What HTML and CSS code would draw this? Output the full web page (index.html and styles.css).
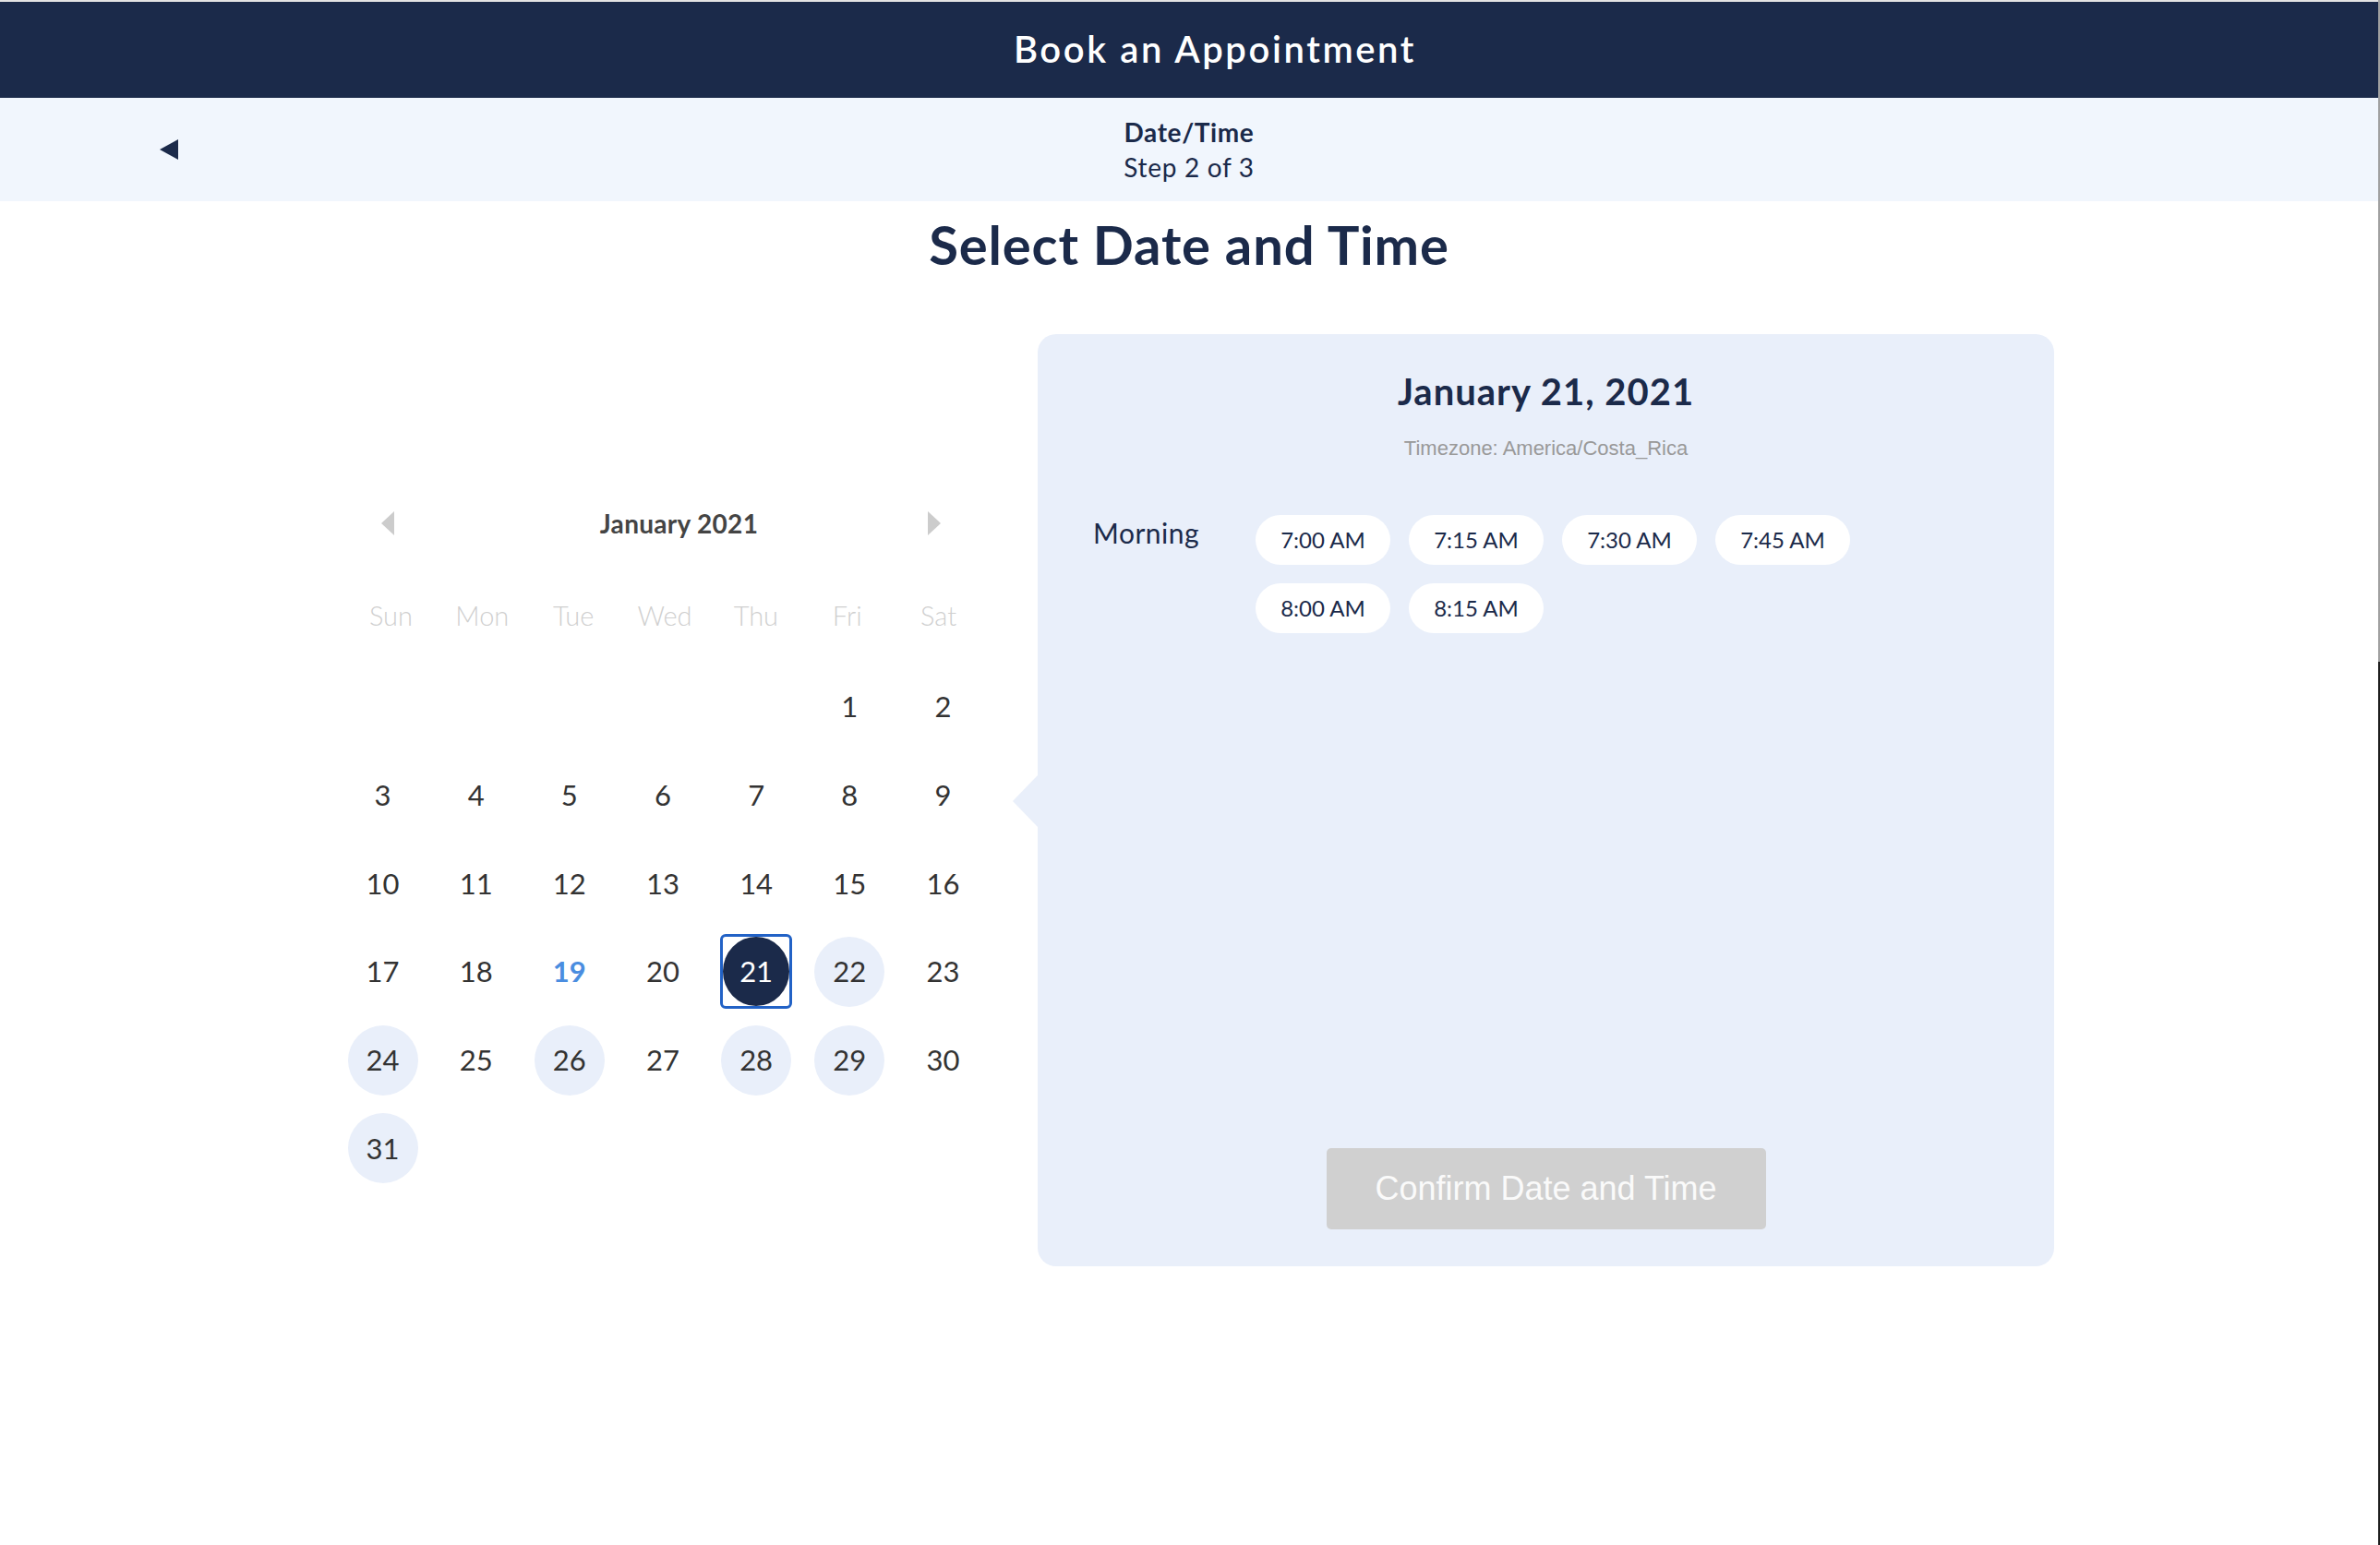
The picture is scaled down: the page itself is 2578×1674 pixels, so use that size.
FILE: index.html
```html
<!DOCTYPE html>
<html lang="en">
<head>
<meta charset="utf-8">
<title>Book an Appointment</title>
<link rel="stylesheet" href="styles.css">
</head>
<body>
<header class="topbar">
  <h1 class="topbar-title">Book an Appointment</h1>
</header>
<nav class="stepbar">
  <div class="stepbar-back">
    <button class="back-btn" aria-label="Back">
      <svg width="20" height="22" viewBox="0 0 20 22"><path d="M0 11 L20 0 L20 22 Z" fill="#1b2a4a"/></svg>
    </button>
  </div>
  <div class="stepbar-text">
    <div class="step-name">Date/Time</div>
    <div class="step-count">Step 2 of 3</div>
  </div>
  <div></div>
</nav>
<main>
  <h2 class="page-title">Select Date and Time</h2>
  <div class="picker">
    <section class="calendar">
      <div class="cal-nav">
        <svg class="cal-arrow" width="14" height="26" viewBox="0 0 14 26"><path d="M0 13 L14 0 L14 26 Z" fill="#cccccc"/></svg>
        <div class="cal-month">January 2021</div>
        <svg class="cal-arrow" width="14" height="26" viewBox="0 0 14 26"><path d="M14 13 L0 0 L0 26 Z" fill="#cccccc"/></svg>
      </div>
      <div class="cal-weekdays">
        <span>Sun</span><span>Mon</span><span>Tue</span><span>Wed</span><span>Thu</span><span>Fri</span><span>Sat</span>
      </div>
      <div class="cal-days">
        <div class="cal-day"></div><div class="cal-day"></div><div class="cal-day"></div><div class="cal-day"></div><div class="cal-day"></div>
        <div class="cal-day"><span class="day-num">1</span></div>
        <div class="cal-day"><span class="day-num">2</span></div>
        <div class="cal-day"><span class="day-num">3</span></div>
        <div class="cal-day"><span class="day-num">4</span></div>
        <div class="cal-day"><span class="day-num">5</span></div>
        <div class="cal-day"><span class="day-num">6</span></div>
        <div class="cal-day"><span class="day-num">7</span></div>
        <div class="cal-day"><span class="day-num">8</span></div>
        <div class="cal-day"><span class="day-num">9</span></div>
        <div class="cal-day"><span class="day-num">10</span></div>
        <div class="cal-day"><span class="day-num">11</span></div>
        <div class="cal-day"><span class="day-num">12</span></div>
        <div class="cal-day"><span class="day-num">13</span></div>
        <div class="cal-day"><span class="day-num">14</span></div>
        <div class="cal-day"><span class="day-num">15</span></div>
        <div class="cal-day"><span class="day-num">16</span></div>
        <div class="cal-day"><span class="day-num">17</span></div>
        <div class="cal-day"><span class="day-num">18</span></div>
        <div class="cal-day"><span class="day-num today">19</span></div>
        <div class="cal-day"><span class="day-num">20</span></div>
        <div class="cal-day"><span class="sel-frame"><span class="day-num selected">21</span></span></div>
        <div class="cal-day"><span class="day-num available">22</span></div>
        <div class="cal-day"><span class="day-num">23</span></div>
        <div class="cal-day"><span class="day-num available">24</span></div>
        <div class="cal-day"><span class="day-num">25</span></div>
        <div class="cal-day"><span class="day-num available">26</span></div>
        <div class="cal-day"><span class="day-num">27</span></div>
        <div class="cal-day"><span class="day-num available">28</span></div>
        <div class="cal-day"><span class="day-num available">29</span></div>
        <div class="cal-day"><span class="day-num">30</span></div>
        <div class="cal-day"><span class="day-num available">31</span></div>
      </div>
    </section>
    <section class="slots">
      <h3 class="slots-date">January 21, 2021</h3>
      <div class="slots-tz">Timezone: America/Costa_Rica</div>
      <div class="slot-group">
        <div class="slot-label">Morning</div>
        <div class="slot-list">
          <button class="slot">7:00 AM</button>
          <button class="slot">7:15 AM</button>
          <button class="slot">7:30 AM</button>
          <button class="slot">7:45 AM</button>
          <button class="slot">8:00 AM</button>
          <button class="slot">8:15 AM</button>
        </div>
      </div>
      <button class="confirm">Confirm Date and Time</button>
    </section>
  </div>
</main>
</body>
</html>
```
FILE: styles.css
```css
html {
  background: #ffffff linear-gradient(to bottom, #a0a0a0 0, #a0a0a0 717px, #1e1e1e 717px) no-repeat right top / 2px 100%;
  min-height: 100%;
}
body {
  margin: 0 2px 0 0;
  border-top: 2px solid #e3e3e3;
  background: #ffffff;
  min-height: calc(100vh - 2px);
  font-family: Lato, "Noto Sans", sans-serif;
  color: #1b2a4a;
}

.topbar {
  background: #1b2a4a;
  height: 104px;
  box-sizing: border-box;
  display: flex;
  align-items: center;
  justify-content: center;
  padding-left: 56px;
  padding-bottom: 3px;
}
.topbar-title {
  margin: 0;
  font-weight: 600;
  font-size: 40px;
  line-height: 50px;
  color: #ffffff;
  letter-spacing: 2.6px;
}

.stepbar {
  background: #f1f6fd;
  height: 112px;
  display: grid;
  grid-template-columns: 1fr auto 1fr;
  align-items: center;
}
.stepbar-back {
  padding-left: 173px;
  display: flex;
}
.back-btn {
  border: none;
  background: none;
  padding: 0;
  display: block;
  line-height: 0;
}
.stepbar-text {
  text-align: center;
}
.step-name {
  font-weight: 700;
  font-size: 28px;
  line-height: 38px;
  letter-spacing: 0.6px;
}
.step-count {
  font-weight: 400;
  font-size: 28px;
  line-height: 38px;
  letter-spacing: 0.7px;
}

.page-title {
  margin: 12px 0 0;
  text-align: center;
  font-weight: 700;
  font-size: 58px;
  line-height: 70px;
  letter-spacing: 0.85px;
  color: #1b2a4a;
}

.picker {
  display: flex;
  justify-content: center;
  align-items: flex-start;
  gap: 52px;
  margin-top: 62px;
  padding-left: 13px;
}

.calendar {
  width: 708px;
  margin-top: 175px;
}
.cal-nav {
  height: 60px;
  display: flex;
  align-items: center;
  padding: 0 53px 0 49px;
}
.cal-arrow {
  display: block;
  flex: none;
}
.cal-month {
  flex: 1;
  text-align: center;
  padding-left: 39px;
  font-weight: 700;
  font-size: 28px;
  line-height: 60px;
  letter-spacing: 0.3px;
  color: #444444;
}
.cal-weekdays {
  display: grid;
  grid-template-columns: repeat(7, 1fr);
  margin-top: 40px;
  padding: 0 6px 0 10px;
  height: 60px;
  font-weight: 300;
  font-size: 29px;
  line-height: 60px;
  color: #cfcfcf;
  text-align: center;
}
.cal-days {
  display: grid;
  grid-template-columns: repeat(7, 1fr);
  grid-auto-rows: 95.7px;
  margin-top: 21px;
}
.cal-day {
  display: flex;
  align-items: center;
  justify-content: center;
}
.day-num {
  width: 76px;
  height: 76px;
  border-radius: 50%;
  display: flex;
  align-items: center;
  justify-content: center;
  font-size: 31px;
  line-height: 1;
  color: #333333;
}
.day-num.available {
  background: #e9effa;
}
.day-num.today {
  color: #4a8de0;
  font-weight: 700;
}
.sel-frame {
  display: block;
  width: 72px;
  height: 75px;
  border: 3px solid #2262c6;
  border-radius: 6px;
}
.day-num.selected {
  width: 72px;
  height: 75px;
  background: #1b2a4a;
  color: #ffffff;
}

.slots {
  position: relative;
  width: 1101px;
  height: 1010px;
  box-sizing: border-box;
  background: #e9effa;
  border-radius: 20px;
  padding: 37px 0 40px;
  display: flex;
  flex-direction: column;
}
.slots::before {
  content: "";
  position: absolute;
  left: -27px;
  top: 478px;
  border-top: 28px solid transparent;
  border-bottom: 28px solid transparent;
  border-right: 27px solid #e9effa;
}
.slots-date {
  margin: 0;
  text-align: center;
  font-weight: 700;
  font-size: 40px;
  line-height: 50px;
  letter-spacing: 1px;
  color: #1b2a4a;
}
.slots-tz {
  margin-top: 22px;
  text-align: center;
  font-family: "Liberation Sans", Arial, sans-serif;
  font-size: 22px;
  line-height: 30px;
  color: #999999;
}
.slot-group {
  display: flex;
  align-items: flex-start;
  margin-top: 57px;
  padding-left: 60px;
}
.slot-label {
  width: 176px;
  flex: none;
  font-size: 30px;
  line-height: 38px;
  letter-spacing: 0.5px;
  color: #1b2a4a;
}
.slot-list {
  display: grid;
  grid-template-columns: repeat(4, 146px);
  gap: 20px;
}
.slot {
  height: 54px;
  border: none;
  border-radius: 27px;
  background: #ffffff;
  padding: 0;
  font-family: Lato, "Noto Sans", sans-serif;
  font-size: 24px;
  line-height: 54px;
  color: #1b2a4a;
}
.confirm {
  margin-top: auto;
  align-self: center;
  width: 476px;
  height: 88px;
  border: none;
  border-radius: 5px;
  background: #d0d0d0;
  color: #fafafa;
  font-family: "Liberation Sans", Arial, sans-serif;
  font-size: 36px;
}
```
